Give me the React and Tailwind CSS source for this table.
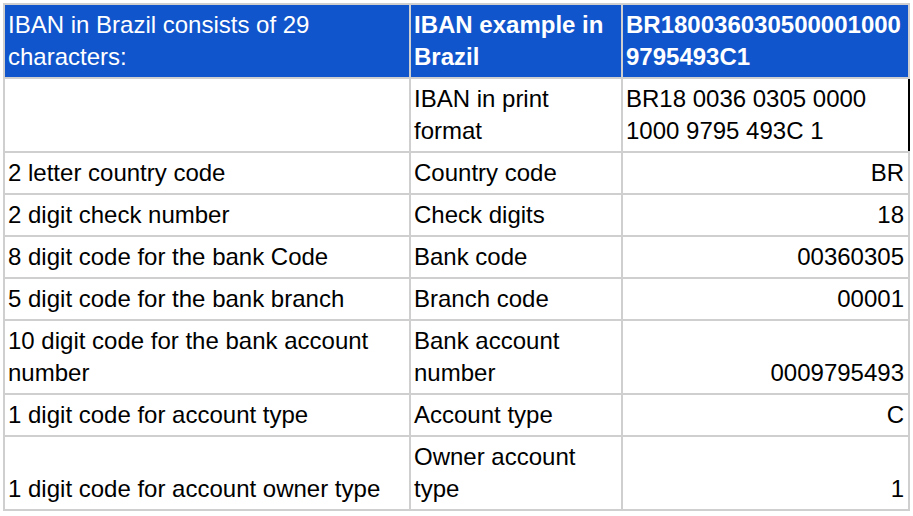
import React from 'react';

const rows = [
  ['2 letter country code', 'Country code', 'BR'],
  ['2 digit check number', 'Check digits', '18'],
  ['8 digit code for the bank Code', 'Bank code', '00360305'],
  ['5 digit code for the bank branch', 'Branch code', '00001'],
  ['10 digit code for the bank account number', 'Bank account number', '0009795493'],
  ['1 digit code for account type', 'Account type', 'C'],
  ['1 digit code for account owner type', 'Owner account type', '1'],
];

const cell = 'border-2 border-[#cfcfcf] pl-[3px] pr-[4px] pb-[4px] pt-[4px] align-bottom leading-[32px]';

export default function App() {
  return (
    <div className="bg-white w-[913px] h-[516px] pl-[3px] pt-[3px] font-['Liberation_Sans',Arial,sans-serif] text-[24px] text-black">
      <table className="table-fixed border-collapse w-[905px]">
        <colgroup>
          <col className="w-[406px]" />
          <col className="w-[212px]" />
          <col className="w-[287px]" />
        </colgroup>
        <tbody>
          <tr className="h-[74px] bg-[#1155cc] text-white">
            <td className={cell}>IBAN in Brazil consists of 29 characters:</td>
            <td className={cell + ' font-bold'}>IBAN example in Brazil</td>
            <td className={cell + ' font-bold break-all'}>BR180036030500001000 9795493C1</td>
          </tr>
          <tr className="h-[74px]">
            <td className={cell}></td>
            <td className={cell}>IBAN in print format</td>
            <td className={cell + ' border-r-black'}>BR18 0036 0305 0000 1000 9795 493C 1</td>
          </tr>
          {rows.map((r, i) => (
            <tr key={i} className={r[0].length > 34 || r[1].length > 16 ? 'h-[74px]' : 'h-[42px]'}>
              <td className={cell}>{r[0]}</td>
              <td className={cell}>{r[1]}</td>
              <td className={cell + ' text-right'}>{r[2]}</td>
            </tr>
          ))}
        </tbody>
      </table>
    </div>
  );
}
